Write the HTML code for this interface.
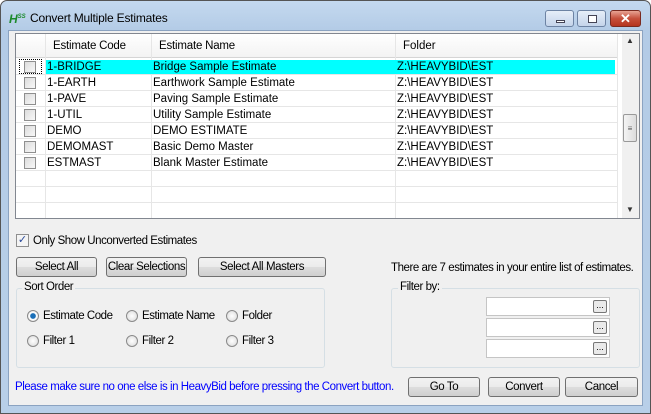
<!DOCTYPE html><html><head><style>
*{box-sizing:border-box;margin:0;padding:0}
body{width:651px;height:414px;overflow:hidden;font-family:"Liberation Sans",sans-serif;font-size:11px;color:#000;background:#fff;position:relative;white-space:nowrap}
.frame{position:absolute;left:0;top:0;width:651px;height:414px;background:linear-gradient(#c4d9ef,#b3cbe6 30px,#b8cfe8);border:1px solid #555;border-radius:7px 7px 0 0}
.client{position:absolute;left:8px;top:30px;width:635px;height:376px;background:#f0f0f0;border:1px solid #8ba3c1}
.a{position:absolute}
.btn{position:absolute;height:20px;border:1px solid #707070;border-radius:3px;background:linear-gradient(#f2f2f2,#ebebeb 50%,#dddddd 51%,#cfcfcf);text-align:center;line-height:19px;font-size:11.5px;letter-spacing:-0.4px}
.grid{position:absolute;left:15px;top:33px;width:625px;height:186px;background:#fff;border:1px solid #828790;overflow:hidden}
.row{position:absolute;left:0;width:601px;height:16px;border-bottom:1px solid #e6e6e6;font-size:11.5px;line-height:16px}
.cb{position:absolute;left:8px;top:2px;width:12px;height:12px;border:1px solid #8f8f8f;background:linear-gradient(135deg,#dcdcdc,#f8f8f8)}
.c1{position:absolute;left:31px}.c2{position:absolute;left:137px}.c3{position:absolute;left:381px}
.vl{position:absolute;top:0;width:1px;height:186px;background:#e6e6e6}
.radio{position:absolute;width:12px;height:12px;border-radius:50%;border:1px solid #8a8a8a;background:radial-gradient(#fff,#d8d8d8)}
.lbl{position:absolute;font-size:11.5px;letter-spacing:-0.45px}
.tb{position:absolute;left:486px;width:124px;height:19px;background:#fff;border:1px solid #c5c5c5}
.tb b{position:absolute;right:2px;top:2px;width:14px;height:13px;border:1px solid #777;border-radius:2px;background:#eaeaea;font-weight:normal;font-size:9px;line-height:9px;text-align:center}
</style></head><body>
<div class="frame"></div>
<div class="a" style="left:9px;top:12px;color:#1c8a2c;font-weight:bold;font-style:italic;font-size:12px">H<sup style="font-size:6px">SS</sup></div>
<div class="a" style="left:30px;top:11px;font-size:12px;letter-spacing:-0.2px">Convert Multiple Estimates</div>
<div class="a" style="left:545px;top:10px;width:29px;height:17px;border:1px solid #6d83a3;border-radius:3px;background:linear-gradient(#e6eef8,#c4d4ea)"><div class="a" style="left:10px;top:9px;width:9px;height:3px;background:#fff;border:1px solid #445"></div></div>
<div class="a" style="left:577px;top:10px;width:29px;height:17px;border:1px solid #6d83a3;border-radius:3px;background:linear-gradient(#e6eef8,#c4d4ea)"><div class="a" style="left:10px;top:4px;width:9px;height:8px;background:#fff;border:1px solid #445"></div></div>
<div class="a" style="left:610px;top:10px;width:31px;height:17px;border:1px solid #7a2a20;border-radius:3px;background:linear-gradient(#e8a394,#c6503c 50%,#b5341f);color:#fff;font-weight:bold;text-align:center;line-height:16px;font-size:13px">✕</div>
<div class="client"></div>
<div class="grid">
<div class="a" style="left:0;top:0;width:601px;height:24px;background:linear-gradient(#fff,#f3f3f3);border-bottom:1px solid #d5d5d5"></div>
<div class="a" style="left:37px;top:6px;font-size:11.5px;letter-spacing:-0.2px">Estimate Code</div>
<div class="a" style="left:143px;top:6px;font-size:11.5px;letter-spacing:-0.2px">Estimate Name</div>
<div class="a" style="left:387px;top:6px;font-size:11.5px">Folder</div>
<div class="vl" style="left:29px"></div><div class="vl" style="left:135px"></div><div class="vl" style="left:379px"></div><div class="vl" style="left:601px"></div>
<div class="row" style="top:25px"><div class="a" style="left:30px;top:1px;width:569px;height:14px;background:#00ffff"></div><div class="a" style="left:3px;top:0;width:23px;height:15px;border:1px dotted #000"></div><div class="cb"></div><span class="c1">1-BRIDGE</span><span class="c2">Bridge Sample Estimate</span><span class="c3">Z:\HEAVYBID\EST</span></div>
<div class="row" style="top:41px"><div class="cb"></div><span class="c1">1-EARTH</span><span class="c2">Earthwork Sample Estimate</span><span class="c3">Z:\HEAVYBID\EST</span></div>
<div class="row" style="top:57px"><div class="cb"></div><span class="c1">1-PAVE</span><span class="c2">Paving Sample Estimate</span><span class="c3">Z:\HEAVYBID\EST</span></div>
<div class="row" style="top:73px"><div class="cb"></div><span class="c1">1-UTIL</span><span class="c2">Utility Sample Estimate</span><span class="c3">Z:\HEAVYBID\EST</span></div>
<div class="row" style="top:89px"><div class="cb"></div><span class="c1">DEMO</span><span class="c2">DEMO ESTIMATE</span><span class="c3">Z:\HEAVYBID\EST</span></div>
<div class="row" style="top:105px"><div class="cb"></div><span class="c1">DEMOMAST</span><span class="c2">Basic Demo Master</span><span class="c3">Z:\HEAVYBID\EST</span></div>
<div class="row" style="top:121px"><div class="cb"></div><span class="c1">ESTMAST</span><span class="c2">Blank Master Estimate</span><span class="c3">Z:\HEAVYBID\EST</span></div>
<div class="row" style="top:137px"></div><div class="row" style="top:153px"></div><div class="row" style="top:169px"></div>
<div class="a" style="left:606px;top:0;width:17px;height:184px;background:#f0f0f0"></div>
<div class="a" style="left:610px;top:2px;font-size:8px;color:#333">▲</div>
<div class="a" style="left:610px;top:171px;font-size:8px;color:#333">▼</div>
<div class="a" style="left:607px;top:80px;width:14px;height:28px;border:1px solid #999;border-radius:2px;background:linear-gradient(90deg,#f4f4f4,#dcdcdc);text-align:center;font-size:8px;line-height:27px;color:#555">≡</div>
</div>
<div class="a" style="left:16px;top:234px;width:13px;height:13px;border:1px solid #8f8f8f;background:#f4f4f4;color:#2a4a9a;font-size:11px;line-height:11px;text-align:center">✓</div>
<div class="lbl" style="left:33px;top:235px">Only Show Unconverted Estimates</div>
<div class="btn" style="left:16px;top:257px;width:81px">Select All</div>
<div class="btn" style="left:106px;top:257px;width:81px">Clear Selections</div>
<div class="btn" style="left:198px;top:257px;width:128px">Select All Masters</div>
<div class="lbl" style="left:391px;top:262px">There are 7 estimates in your entire list of estimates.</div>
<div class="a" style="left:16px;top:288px;width:309px;height:80px;border:1px solid #d5dfe5;border-radius:3px"></div>
<div class="lbl" style="left:22px;top:281px;background:#f0f0f0;padding:0 2px">Sort Order</div>
<div class="radio" style="left:27px;top:310px;background:radial-gradient(#1a6fb8 35%,#fff 45%,#ddd)"></div><div class="lbl" style="left:43px;top:310px">Estimate Code</div>
<div class="radio" style="left:126px;top:310px"></div><div class="lbl" style="left:142px;top:310px">Estimate Name</div>
<div class="radio" style="left:226px;top:310px"></div><div class="lbl" style="left:242px;top:310px">Folder</div>
<div class="radio" style="left:27px;top:335px"></div><div class="lbl" style="left:43px;top:335px">Filter 1</div>
<div class="radio" style="left:126px;top:335px"></div><div class="lbl" style="left:142px;top:335px">Filter 2</div>
<div class="radio" style="left:226px;top:335px"></div><div class="lbl" style="left:242px;top:335px">Filter 3</div>
<div class="a" style="left:391px;top:288px;width:249px;height:80px;border:1px solid #d5dfe5;border-radius:3px"></div>
<div class="lbl" style="left:398px;top:281px;background:#f0f0f0;padding:0 2px">Filter by:</div>
<div class="tb" style="top:297px"><b>...</b></div>
<div class="tb" style="top:318px"><b>...</b></div>
<div class="tb" style="top:339px"><b>...</b></div>
<div class="lbl" style="left:15px;top:381px;color:#0000ff">Please make sure no one else is in HeavyBid before pressing the Convert button.</div>
<div class="btn" style="left:408px;top:377px;width:72px">Go To</div>
<div class="btn" style="left:488px;top:377px;width:72px">Convert</div>
<div class="btn" style="left:565px;top:377px;width:73px">Cancel</div>
</body></html>
